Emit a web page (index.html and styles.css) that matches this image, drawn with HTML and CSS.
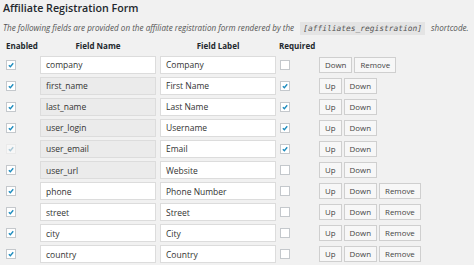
FILE: index.html
```html
<!DOCTYPE html>
<html>
<head>
<meta charset="utf-8">
<link rel="stylesheet" href="styles.css">
</head>
<body>
<div class="page">
  <h2 class="title">Affiliate Registration Form</h2>
  <p class="desc">The following fields are provided on the affiliate registration form rendered by the <code>[affiliates_registration]</code> shortcode.</p>
  <div class="grid">
    <div class="row head">
      <div class="c1">Enabled</div>
      <div class="c2">Field Name</div>
      <div class="c3">Field Label</div>
      <div class="c4">Required</div>
      <div class="c5"></div>
    </div>

    <div class="row">
      <div class="c1"><span class="cb on"><svg viewBox="0 0 10 10"><path d="M2.3 5.2 L4.2 7.2 L7.8 2.8"/></svg></span></div>
      <div class="c2"><span class="inp">company</span></div>
      <div class="c3"><span class="inp">Company</span></div>
      <div class="c4"><span class="cb"></span></div>
      <div class="c5"><span class="btn">Down</span><span class="btn">Remove</span></div>
    </div>

    <div class="row">
      <div class="c1"><span class="cb on"><svg viewBox="0 0 10 10"><path d="M2.3 5.2 L4.2 7.2 L7.8 2.8"/></svg></span></div>
      <div class="c2"><span class="inp ro">first_name</span></div>
      <div class="c3"><span class="inp">First Name</span></div>
      <div class="c4"><span class="cb on"><svg viewBox="0 0 10 10"><path d="M2.3 5.2 L4.2 7.2 L7.8 2.8"/></svg></span></div>
      <div class="c5"><span class="btn">Up</span><span class="btn">Down</span></div>
    </div>

    <div class="row">
      <div class="c1"><span class="cb on"><svg viewBox="0 0 10 10"><path d="M2.3 5.2 L4.2 7.2 L7.8 2.8"/></svg></span></div>
      <div class="c2"><span class="inp ro">last_name</span></div>
      <div class="c3"><span class="inp">Last Name</span></div>
      <div class="c4"><span class="cb on"><svg viewBox="0 0 10 10"><path d="M2.3 5.2 L4.2 7.2 L7.8 2.8"/></svg></span></div>
      <div class="c5"><span class="btn">Up</span><span class="btn">Down</span></div>
    </div>

    <div class="row">
      <div class="c1"><span class="cb on"><svg viewBox="0 0 10 10"><path d="M2.3 5.2 L4.2 7.2 L7.8 2.8"/></svg></span></div>
      <div class="c2"><span class="inp ro">user_login</span></div>
      <div class="c3"><span class="inp">Username</span></div>
      <div class="c4"><span class="cb on"><svg viewBox="0 0 10 10"><path d="M2.3 5.2 L4.2 7.2 L7.8 2.8"/></svg></span></div>
      <div class="c5"><span class="btn">Up</span><span class="btn">Down</span></div>
    </div>

    <div class="row">
      <div class="c1"><span class="cb on dis"><svg viewBox="0 0 10 10"><path d="M2.3 5.2 L4.2 7.2 L7.8 2.8"/></svg></span></div>
      <div class="c2"><span class="inp ro">user_email</span></div>
      <div class="c3"><span class="inp">Email</span></div>
      <div class="c4"><span class="cb on"><svg viewBox="0 0 10 10"><path d="M2.3 5.2 L4.2 7.2 L7.8 2.8"/></svg></span></div>
      <div class="c5"><span class="btn">Up</span><span class="btn">Down</span></div>
    </div>

    <div class="row">
      <div class="c1"><span class="cb on"><svg viewBox="0 0 10 10"><path d="M2.3 5.2 L4.2 7.2 L7.8 2.8"/></svg></span></div>
      <div class="c2"><span class="inp ro">user_url</span></div>
      <div class="c3"><span class="inp">Website</span></div>
      <div class="c4"><span class="cb"></span></div>
      <div class="c5"><span class="btn">Up</span><span class="btn">Down</span></div>
    </div>

    <div class="row">
      <div class="c1"><span class="cb on"><svg viewBox="0 0 10 10"><path d="M2.3 5.2 L4.2 7.2 L7.8 2.8"/></svg></span></div>
      <div class="c2"><span class="inp">phone</span></div>
      <div class="c3"><span class="inp">Phone Number</span></div>
      <div class="c4"><span class="cb"></span></div>
      <div class="c5"><span class="btn">Up</span><span class="btn">Down</span><span class="btn">Remove</span></div>
    </div>

    <div class="row">
      <div class="c1"><span class="cb on"><svg viewBox="0 0 10 10"><path d="M2.3 5.2 L4.2 7.2 L7.8 2.8"/></svg></span></div>
      <div class="c2"><span class="inp">street</span></div>
      <div class="c3"><span class="inp">Street</span></div>
      <div class="c4"><span class="cb"></span></div>
      <div class="c5"><span class="btn">Up</span><span class="btn">Down</span><span class="btn">Remove</span></div>
    </div>

    <div class="row">
      <div class="c1"><span class="cb on"><svg viewBox="0 0 10 10"><path d="M2.3 5.2 L4.2 7.2 L7.8 2.8"/></svg></span></div>
      <div class="c2"><span class="inp">city</span></div>
      <div class="c3"><span class="inp">City</span></div>
      <div class="c4"><span class="cb"></span></div>
      <div class="c5"><span class="btn">Up</span><span class="btn">Down</span><span class="btn">Remove</span></div>
    </div>

    <div class="row">
      <div class="c1"><span class="cb on"><svg viewBox="0 0 10 10"><path d="M2.3 5.2 L4.2 7.2 L7.8 2.8"/></svg></span></div>
      <div class="c2"><span class="inp">country</span></div>
      <div class="c3"><span class="inp">Country</span></div>
      <div class="c4"><span class="cb"></span></div>
      <div class="c5"><span class="btn">Up</span><span class="btn">Down</span><span class="btn">Remove</span></div>
    </div>
  </div>
</div>
</body>
</html>
```
FILE: styles.css
```css
html, body {
  margin: 0;
  padding: 0;
  background: #f1f1f1;
}
body {
  font-family: "Open Sans", "Noto Sans", sans-serif;
  color: #333;
}
.page {
  padding: 0 0 0 3px;
}
.title {
  margin: 0;
  font-size: 10.7px;
  font-weight: 600;
  line-height: 16px;
  color: #23282d;
}
.desc {
  margin: 5px 0 0 0;
  font-size: 8.1px;
  font-style: italic;
  line-height: 14px;
  color: #555;
  white-space: nowrap;
}
.desc code {
  font-family: "DejaVu Sans Mono", "Liberation Mono", monospace;
  font-style: italic;
  font-size: 7.9px;
  background: #e4e4e4;
  padding: 2px 3px;
  margin: 0 4px;
  color: #555;
}
.grid {
  display: flex;
  flex-direction: column;
  margin-top: 1px;
  padding-left: 1px;
}
.row {
  display: grid;
  grid-template-columns: 36px 116px 120px 43px 1fr;
  height: 21.1px;
  align-items: center;
}
.row .c3 { padding-left: 4px; }
.row .c4 { padding-left: 4px; }
.row.head {
  height: 17px;
  font-size: 8px;
  font-weight: 700;
  color: #23282d;
}
.head .c1 { padding-left: 2px; }
.head .c2, .head .c3 { text-align: center; }
.head .c4 { padding-left: 3px; }
.c1 { padding-left: 2px; }
.cb {
  display: block;
  width: 10px;
  height: 10px;
  box-sizing: border-box;
  border: 1px solid #c4c8cc;
  background: #fff;
  position: relative;
}
.cb svg {
  position: absolute;
  left: 0;
  top: 0;
  width: 8px;
  height: 8px;
}
.cb svg path {
  fill: none;
  stroke: #1e8cbe;
  stroke-width: 1.7;
}
.cb.dis {
  border-color: #eaeaea;
  background: #f7f7f7;
}
.cb.dis svg path { stroke: #a9c7d6; }
.inp {
  display: flex;
  align-items: center;
  height: 18px;
  box-sizing: border-box;
  border: 1px solid #dcdcdc;
  background: #fff;
  padding-left: 5px;
  font-size: 8.5px;
  color: #333;
}
.inp.ro {
  background: #ebebeb;
}
.c5 {
  display: flex;
  gap: 2px;
}
.btn {
  display: inline-flex;
  align-items: center;
  height: 16px;
  box-sizing: border-box;
  padding: 0 5px;
  border: 1px solid #cfcfcf;
  background: #f7f7f7;
  font-size: 7.9px;
  color: #444;
}
```
